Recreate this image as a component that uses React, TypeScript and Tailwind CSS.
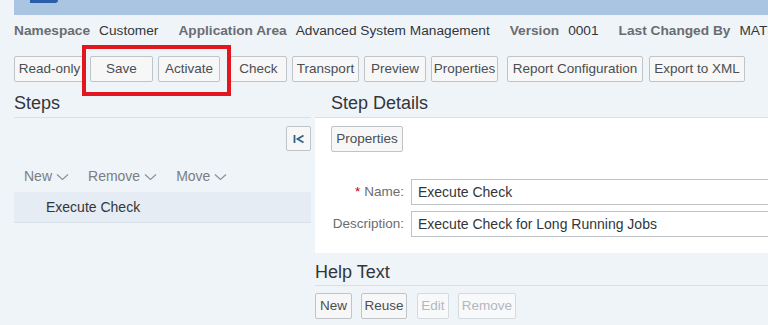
import React from "react"

const font = { fontFamily: '"Liberation Sans", Arial, sans-serif' }

function Btn({ children, disabled, className = "" }: { children: React.ReactNode; disabled?: boolean; className?: string }) {
    return (
        <button
            className={
                "shrink-0 h-[26px] px-0 rounded-[2px] border text-[13.5px] leading-none whitespace-nowrap " +
                (disabled
                    ? "border-[#d5dadf] bg-[#f7f9fb] text-[#b4b8bc] "
                    : "border-[#bfc4c9] bg-[#f7f7f7] text-[#4a4e52] ") +
                className
            }
        >
            {children}
        </button>
    )
}

function Chevron() {
    return (
        <svg width="13" height="8" viewBox="0 0 13 8" className="ml-[4px] mt-[2px]">
            <path d="M1 1.5 L6.5 6.5 L12 1.5" fill="none" stroke="#8a9096" strokeWidth="1.2" />
        </svg>
    )
}

function Meta({ label, value }: { label: string; value: string }) {
    return (
        <span className="mr-[20px] whitespace-nowrap">
            <span className="font-bold text-[#6a6d70]">{label}</span>
            <span className="ml-[9px] text-[#32363a]">{value}</span>
        </span>
    )
}

export default function App() {
    return (
        <div className="relative w-[768px] h-[325px] overflow-hidden bg-[#eff4f9]" style={font}>
            {/* shell bar */}
            <div className="relative ml-[14px] h-[15px] bg-[#a9c5e2]">
                <div className="absolute left-[16px] top-0 w-[28px] h-[3px] bg-[#2a5ea9] rounded-br-[3px]" />
            </div>

            {/* header attributes */}
            <div className="flex items-center h-[18px] mt-[7px] pl-[14px] text-[13.7px] whitespace-nowrap overflow-hidden">
                <Meta label="Namespace" value="Customer" />
                <Meta label="Application Area" value="Advanced System Management" />
                <Meta label="Version" value="0001" />
                <Meta label="Last Changed By" value="MATRIX" />
            </div>

            {/* toolbar */}
            <div className="flex items-center mt-[16px] pl-[14px]">
                <Btn className="w-[71px]">Read-only</Btn>
                <Btn className="w-[63px] ml-[5px]">Save</Btn>
                <Btn className="w-[62px] ml-[5px]">Activate</Btn>
                <Btn className="w-[57px] ml-[10px]">Check</Btn>
                <Btn className="w-[67px] ml-[5px]">Transport</Btn>
                <Btn className="w-[62px] ml-[5px]">Preview</Btn>
                <Btn className="w-[67px] ml-[5px]">Properties</Btn>
                <Btn className="w-[136px] ml-[9px]">Report Configuration</Btn>
                <Btn className="w-[96px] ml-[6px]">Export to XML</Btn>
            </div>

            {/* highlight */}
            <div className="absolute left-[82px] top-[45px] w-[149px] h-[51px] border-[4px] border-[#e3151e]" />

            <div className="flex mt-[8px]">
                {/* steps */}
                <div className="w-[297px] ml-[14px] shrink-0">
                    <div className="h-[28px] flex items-center text-[18px] text-[#32363a] border-b border-[#d8e0e8]">Steps</div>
                    <div className="flex justify-end pt-[8px]">
                        <button className="w-[25px] h-[25px] rounded-[2px] border border-[#bfc4c9] bg-[#f7f7f7] flex items-center justify-center">
                            <svg width="12" height="10" viewBox="0 0 12 10">
                                <path d="M1.5 1 V9" stroke="#346187" strokeWidth="1.8" />
                                <path d="M10.5 1.5 L4.5 5 L10.5 8.5" fill="none" stroke="#346187" strokeWidth="1.8" />
                            </svg>
                        </button>
                    </div>
                    <div className="flex items-center mt-[16px] h-[18px] pl-[10px] text-[14px] text-[#7a7e82]">
                        <span className="flex items-center">New<Chevron /></span>
                        <span className="flex items-center ml-[19px]">Remove<Chevron /></span>
                        <span className="flex items-center ml-[19px]">Move<Chevron /></span>
                    </div>
                    <div className="mt-[7px] h-[31px] flex items-center pl-[32px] bg-[#e5ecf3] border-b border-[#d8e0e8] text-[14px] text-[#32363a]">
                        Execute Check
                    </div>
                </div>

                {/* details */}
                <div className="ml-[4px] flex-1">
                    <div className="h-[28px] flex items-center pl-[16px] text-[18px] text-[#32363a] border-b border-[#d8e0e8]">Step Details</div>
                    <div className="bg-white h-[135px] pl-[16px] pt-[8px]">
                        <Btn className="w-[72px]">Properties</Btn>
                        <div className="mt-[27px] flex flex-col gap-[6px]">
                            <div className="flex items-center">
                                <div className="w-[73px] text-right text-[13.5px] text-[#6a6d70]">
                                    <span className="text-[#bb0000] mr-[4px]">*</span>Name:
                                </div>
                                <div className="ml-[7px] flex-1 h-[26px] border border-[#bfc4c9] border-r-0 flex items-center pl-[6px] text-[14px] text-[#32363a]">
                                    Execute Check
                                </div>
                            </div>
                            <div className="flex items-center">
                                <div className="w-[73px] text-right text-[13.5px] text-[#6a6d70]">Description:</div>
                                <div className="ml-[7px] flex-1 h-[26px] border border-[#bfc4c9] border-r-0 flex items-center pl-[6px] text-[14px] text-[#32363a]">
                                    Execute Check for Long Running Jobs
                                </div>
                            </div>
                        </div>
                    </div>
                    <div className="h-[33px] flex items-end text-[18px] leading-[26px] text-[#32363a] border-b border-[#d8e0e8]">Help Text</div>
                    <div className="flex items-center pt-[7px]">
                        <Btn className="w-[37px]">New</Btn>
                        <Btn className="w-[46px] ml-[9px]">Reuse</Btn>
                        <Btn disabled className="w-[32px] ml-[10px]">Edit</Btn>
                        <Btn disabled className="w-[58px] ml-[9px]">Remove</Btn>
                    </div>
                </div>
            </div>
        </div>
    )
}
